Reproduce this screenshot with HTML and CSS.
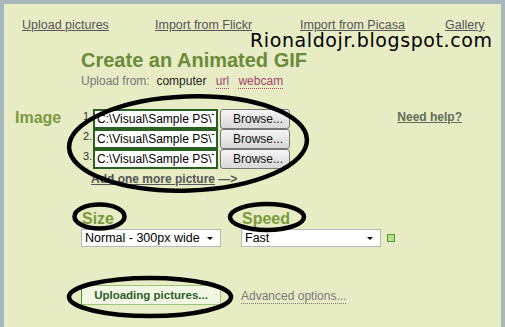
FILE: index.html
```html
<!DOCTYPE html>
<html lang="en">
<head>
    <meta charset="UTF-8">
    <meta name="viewport" content="width=device-width, initial-scale=1.0">
    <title>Create an Animated GIF</title>
    <link rel="stylesheet" href="styles.css">
</head>
<body>
    <div class="page">
        <nav class="tabs">
            <a href="#">Upload pictures</a>
            <a href="#">Import from Flickr</a>
            <a href="#">Import from Picasa</a>
            <a href="#">Gallery</a>
        </nav>

        <header class="intro">
            <h1>Create an Animated GIF</h1>
            <p class="source">
                Upload from:&nbsp; <span class="current">computer</span>
                <a href="#" class="alt">url</a>
                <a href="#" class="alt">webcam</a>
            </p>
        </header>

        <section class="image-block">
            <h2 class="label image-label">Image</h2>
            <div class="files">
                <div class="file-row">
                    <span class="num">1.</span>
                    <input type="text" class="path" value="C:\Visual\Sample PS\Tour.jpg" readonly>
                    <button class="browse">Browse...</button>
                </div>
                <div class="file-row">
                    <span class="num">2.</span>
                    <input type="text" class="path" value="C:\Visual\Sample PS\Tour2.jpg" readonly>
                    <button class="browse">Browse...</button>
                </div>
                <div class="file-row">
                    <span class="num">3.</span>
                    <input type="text" class="path" value="C:\Visual\Sample PS\Tour3.jpg" readonly>
                    <button class="browse">Browse...</button>
                </div>
                <p class="add-more"><a href="#">Add one more picture</a> <span class="arrow">&mdash;&gt;</span></p>
            </div>
            <a href="#" class="help">Need help?</a>
        </section>

        <section class="settings">
            <div class="setting size">
                <h2 class="label">Size</h2>
                <div class="select">Normal - 300px wide</div>
            </div>
            <div class="setting speed">
                <h2 class="label">Speed</h2>
                <div class="select-line">
                    <div class="select">Fast</div>
                    <span class="swatch"></span>
                </div>
            </div>
        </section>

        <div class="actions">
            <button class="upload">Uploading pictures...</button>
            <a href="#" class="advanced">Advanced options...</a>
        </div>
    </div>

    <!-- hand drawn marks over the screenshot -->
    <svg class="marks" width="505" height="327" viewBox="0 0 505 327">
        <ellipse cx="188" cy="143.5" rx="119" ry="47" transform="rotate(-2 188 143.5)" />
        <ellipse cx="99.5" cy="216.5" rx="25" ry="12" />
        <ellipse cx="267" cy="217" rx="37" ry="13" />
        <ellipse cx="150" cy="297" rx="81" ry="19" />
    </svg>
    <div class="watermark">Rionaldojr.blogspot.com</div>
</body>
</html>
```

FILE: styles.css
```css
body {
    margin: 0;
    position: relative;
    font-family: "Liberation Sans", Arial, sans-serif;
    background: #e7ecc5;
}
.page {
    box-sizing: border-box;
    width: 505px;
    height: 327px;
    border-top: 4px solid #a7b8bc;
    border-left: 4px solid #a7b8bc;
    border-right: 4px solid #a7b8bc;
    background: #e7ecc5;
    overflow: hidden;
}

/* top links */
.tabs {
    display: grid;
    grid-template-columns: 133px 145px 145px auto;
    padding: 13px 0 0 18px;
    font-size: 12.5px;
    line-height: 16px;
}
.tabs a {
    justify-self: start;
    color: #555;
}

/* title */
.intro {
    padding-left: 77px;
    margin-top: 16px;
}
.intro h1 {
    margin: 0;
    font-size: 20px;
    line-height: 22px;
    color: #6b8a3a;
}
.source {
    margin: 3px 0 0 0;
    font-size: 12px;
    line-height: 14px;
    color: #777;
}
.source .current {
    color: #222;
    margin-right: 6px;
}
.source .alt {
    color: #a2456a;
    text-decoration: none;
    border-bottom: 1px dotted #a2456a;
    margin-right: 6px;
}

.label {
    margin: 0;
    font-size: 16px;
    line-height: 18px;
    color: #7b9a3e;
}

/* image rows */
.image-block {
    display: flex;
    align-items: flex-start;
    margin-top: 21px;
    padding: 0 39px 0 11px;
}
.image-label {
    flex: none;
    width: 67px;
}
.files {
    flex: none;
}
.file-row {
    display: flex;
    height: 20px;
}
.num {
    width: 10px;
    padding-left: 1px;
    font-size: 11px;
    line-height: 15px;
    color: #333;
}
.path {
    box-sizing: border-box;
    width: 125px;
    height: 20px;
    margin: 0;
    padding: 0 2px;
    border: 2px solid #2a6022;
    background: #fff;
    font-family: "Liberation Sans", Arial, sans-serif;
    font-size: 12px;
    color: #000;
    outline: none;
}
.browse {
    box-sizing: border-box;
    width: 70px;
    height: 20px;
    margin: 0 0 0 2px;
    padding: 0 0 0 6px;
    border: 1px solid #777;
    border-radius: 3px;
    background: linear-gradient(#f4f4f4, #d8d8d8);
    font-family: "Liberation Sans", Arial, sans-serif;
    font-size: 12px;
    color: #111;
}
.add-more {
    margin: 3px 0 0 9px;
    font-size: 12px;
    line-height: 15px;
    font-weight: bold;
}
.add-more a {
    color: #555;
}
.add-more .arrow {
    display: inline-block;
    color: #555;
}
.help {
    margin-left: auto;
    margin-top: 1px;
    font-size: 12px;
    font-weight: bold;
    color: #5e6e55;
}

/* size and speed */
.settings {
    display: flex;
    margin-top: 23px;
    padding-left: 77px;
}
.setting {
    width: 160px;
}
.setting .label {
    padding-left: 1px;
    margin-bottom: 1px;
}
.select-line {
    display: flex;
    align-items: center;
}
.select {
    box-sizing: border-box;
    position: relative;
    width: 140px;
    height: 18px;
    padding-left: 3px;
    border: 1px solid #b3b9bd;
    background: #fff;
    font-size: 12.5px;
    line-height: 16px;
    color: #000;
}
.select::after {
    content: "";
    position: absolute;
    right: 7px;
    top: 7px;
    border-left: 3px solid transparent;
    border-right: 3px solid transparent;
    border-top: 3px solid #000;
}
.swatch {
    box-sizing: border-box;
    width: 8px;
    height: 8px;
    margin-left: 6px;
    border: 1px solid #4f9a33;
    background: #b6e08a;
}

/* bottom */
.actions {
    display: flex;
    align-items: center;
    margin-top: 38px;
    padding-left: 77px;
}
.upload {
    box-sizing: border-box;
    width: 140px;
    height: 20px;
    margin: 0;
    border: 1px solid #9cc47a;
    border-left-color: #4f8a3a;
    background: #f2f7e4;
    font-family: "Liberation Sans", Arial, sans-serif;
    font-size: 11.5px;
    font-weight: bold;
    color: #2e5d2e;
}
.advanced {
    margin-left: 20px;
    margin-top: 2px;
    font-size: 12px;
    color: #7a7a7a;
    text-decoration: none;
    border-bottom: 1px dotted #7a7a7a;
}

/* overlays */
.marks {
    position: absolute;
    top: 0;
    left: 0;
    pointer-events: none;
}
.marks ellipse {
    fill: none;
    stroke: #000;
    stroke-width: 4.5;
}
.watermark {
    position: absolute;
    top: 28px;
    left: 250px;
    font-family: "DejaVu Sans", sans-serif;
    font-size: 19px;
    letter-spacing: 0.6px;
    line-height: 24px;
    color: #000;
}
```
